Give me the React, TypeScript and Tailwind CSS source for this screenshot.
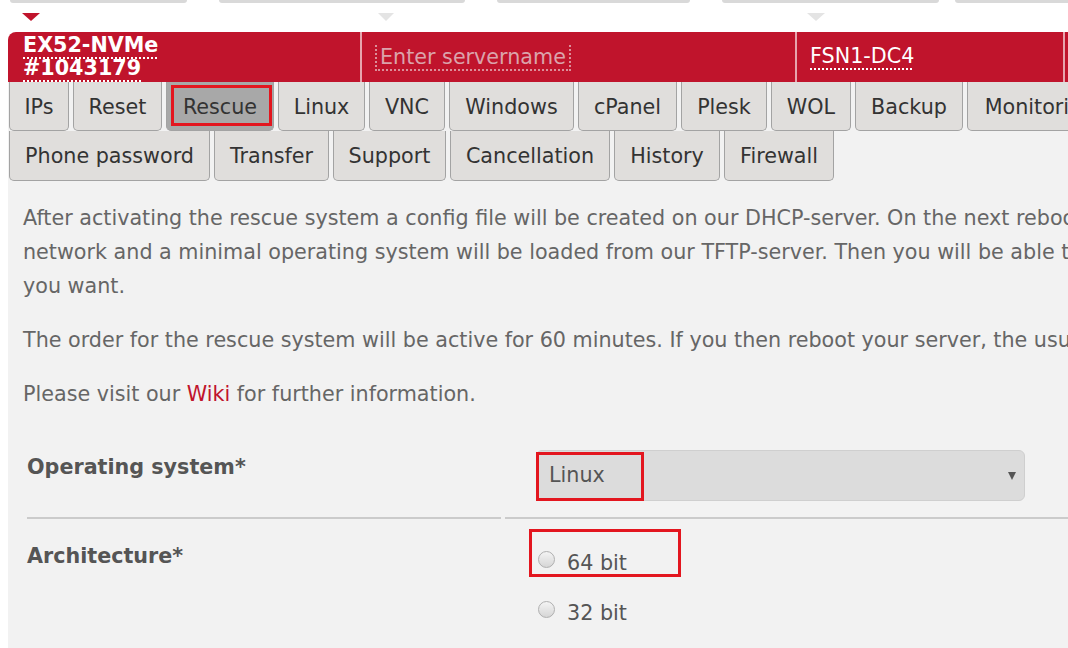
const RED = "bg-[#c0142c]";

const row1 = [
  { label: "IPs", w: "w-[60px]" },
  { label: "Reset", w: "w-[89px]" },
  { label: "Rescue", w: "w-[108px]", active: true },
  { label: "Linux", w: "w-[87px]" },
  { label: "VNC", w: "w-[76px]" },
  { label: "Windows", w: "w-[125px]" },
  { label: "cPanel", w: "w-[99px]" },
  { label: "Plesk", w: "w-[86px]" },
  { label: "WOL", w: "w-[80px]" },
  { label: "Backup", w: "w-[108px]" },
  { label: "Monitoring", w: "w-[146px]" },
];

const row2 = [
  { label: "Phone password", w: "w-[201px]" },
  { label: "Transfer", w: "w-[115px]" },
  { label: "Support", w: "w-[113px]" },
  { label: "Cancellation", w: "w-[160px]" },
  { label: "History", w: "w-[106px]" },
  { label: "Firewall", w: "w-[110px]" },
];

type Tab = { label: string; w: string; active?: boolean };

function TabButton({ tab, h }: { tab: Tab; h: string }) {
  return (
    <div
      className={`relative shrink-0 ${tab.w} ${h} pt-[3px] flex items-center justify-center whitespace-nowrap overflow-hidden border-x border-b border-[#a3a3a3] rounded-b-[5px] text-[#333] ${
        tab.active ? "bg-[#a8a8a8]" : "bg-[#e0dedc]"
      }`}
    >
      {tab.label}
      {/* Markierung im Screenshot */}
      {tab.active && (
        <div className="absolute left-[4px] right-[1px] top-[3px] bottom-[4px] border-[3px] border-[#e3161f]" />
      )}
    </div>
  );
}

function Radio({ label }: { label: string }) {
  return (
    <div className="h-[50px] flex items-center">
      <span className="mb-[8px] w-[17px] h-[17px] rounded-full border border-[#b0b0b0] bg-gradient-to-b from-[#f4f4f4] to-[#d6d6d6]" />
      <span className="ml-[12px] pt-[2px]">{label}</span>
    </div>
  );
}

export default function App() {
  return (
    <div className="w-[1068px] h-[648px] overflow-hidden bg-white font-['DejaVu_Sans',sans-serif] text-[20.7px]">
      {/* Obere Leiste */}
      <div className="h-[32px]">
        <div className="flex">
          <div className="ml-[10px] w-[177px] h-[3px] rounded-b-[4px] bg-[#d9d9d9]" />
          <div className="ml-[32px] w-[246px] h-[3px] rounded-b-[4px] bg-[#d9d9d9]" />
          <div className="ml-[32px] w-[193px] h-[3px] rounded-b-[4px] bg-[#d9d9d9]" />
          <div className="ml-[32px] w-[217px] h-[3px] rounded-b-[4px] bg-[#d9d9d9]" />
          <div className="ml-[16px] flex-1 h-[3px] rounded-bl-[4px] bg-[#d9d9d9]" />
        </div>
        <div className="flex mt-[10px]">
          <div className="ml-[22px] w-0 h-0 border-x-[9px] border-x-transparent border-t-[8px] border-t-[#c0142c]" />
          <div className="ml-[338px] w-0 h-0 border-x-[8px] border-x-transparent border-t-[8px] border-t-[#e4e4e4]" />
          <div className="ml-[413px] w-0 h-0 border-x-[9px] border-x-transparent border-t-[8px] border-t-[#e4e4e4]" />
        </div>
      </div>

      {/* Server-Kopf */}
      <div className={`ml-[8px] h-[50px] flex ${RED} rounded-tl-[8px] text-white`}>
        <div className="w-[352px] shrink-0 pl-[15px] flex flex-col justify-center font-bold leading-[23px]">
          <span className="w-fit underline decoration-dotted decoration-2 underline-offset-[5px]">EX52-NVMe</span>
          <span className="w-fit underline decoration-dotted decoration-2 underline-offset-[5px]">#1043179</span>
        </div>
        <div className="w-[435px] shrink-0 border-l-2 border-[#e7a4ad] pl-[13px] flex items-center">
          <span className="mt-[1px] px-[3px] leading-[24px] border-x-2 border-b-2 border-dotted border-[#dc8f9a] text-[#dba3ab]">
            Enter servername
          </span>
        </div>
        <div className="w-[268px] shrink-0 border-l-2 border-[#e7a4ad] pl-[13px] flex items-center">
          <span className="underline decoration-dotted decoration-2 underline-offset-[5px]">FSN1-DC4</span>
        </div>
        <div className="flex-1 border-l-2 border-[#e7a4ad]" />
      </div>

      <div className="ml-[8px] h-[566px] bg-[#f2f2f2] overflow-hidden">
        {/* Tabs */}
        <div className="pl-[1px] flex gap-[4px]">
          {row1.map((t) => (
            <TabButton key={t.label} tab={t} h="h-[49px]" />
          ))}
        </div>
        <div className="pl-[1px] flex gap-[4px]">
          {row2.map((t) => (
            <TabButton key={t.label} tab={t} h="h-[50px]" />
          ))}
        </div>

        {/* Beschreibung */}
        <div className="pl-[15px] pt-[20px] text-[#666] leading-[34px] whitespace-nowrap">
          <p>
            After activating the rescue system a config file will be created on our DHCP-server. On the next reboot your server will get the config file from the
            <br />
            network and a minimal operating system will be loaded from our TFTP-server. Then you will be able to use the rescue system as long as
            <br />
            you want.
          </p>
          <p className="mt-[20px]">
            The order for the rescue system will be active for 60 minutes. If you then reboot your server, the usual system will be loaded again.
          </p>
          <p className="mt-[20px]">
            Please visit our <span className="text-[#c0142c]">Wiki</span> for further information.
          </p>
        </div>

        {/* Formular */}
        <div className="ml-[19px] mt-[29px] text-[#555]">
          <div className="flex gap-[4px]">
            <div className="w-[474px] shrink-0 pt-[12px] pb-[35px] font-bold leading-[30px] border-b-2 border-[#cbcbcb]">
              Operating system*
            </div>
            <div className="flex-1 pl-[31px] pt-[10px] pb-[15px] border-b-2 border-[#cbcbcb]">
              <div className="relative w-[489px] h-[51px] rounded-[6px] border border-[#cfcfcf] bg-[#dcdcdc] flex items-center justify-between pl-[12px] pr-[8px]">
                <span className="pt-[1px]">Linux</span>
                <span className="w-0 h-0 border-x-[4px] border-x-transparent border-t-[8px] border-t-[#555]" />
                <div className="absolute left-[-1px] top-[1px] w-[108px] h-[49px] border-[3px] border-[#e3161f]" />
              </div>
            </div>
          </div>
          <div className="flex gap-[4px]">
            <div className="w-[474px] shrink-0 pt-[22px] font-bold leading-[30px]">Architecture*</div>
            <div className="flex-1 pl-[33px] pt-[19px]">
              <div className="relative w-fit">
                <Radio label="64 bit" />
                <div className="absolute left-[-9px] top-[-9px] w-[152px] h-[48px] border-[3px] border-[#e3161f]" />
              </div>
              <Radio label="32 bit" />
            </div>
          </div>
        </div>
      </div>
    </div>
  );
}
